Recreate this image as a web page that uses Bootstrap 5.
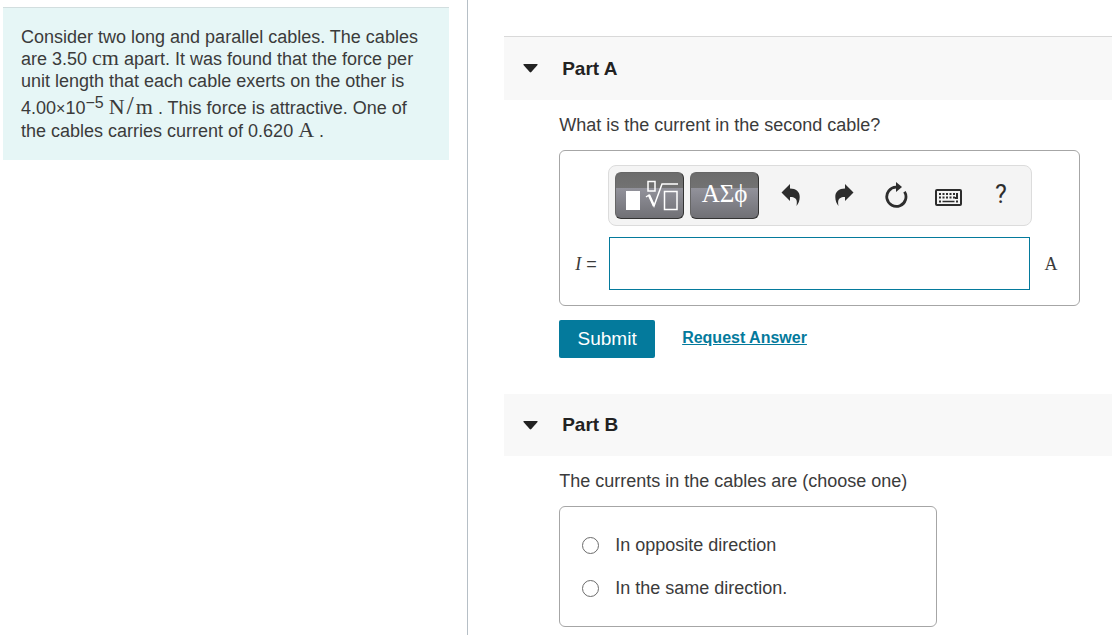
<!DOCTYPE html>
<html lang="en">
<head>
<meta charset="utf-8">
<meta name="viewport" content="width=device-width, initial-scale=1">
<title>Parallel cables</title>
<link href="https://cdn.jsdelivr.net/npm/bootstrap@5.3.0/dist/css/bootstrap.min.css" rel="stylesheet">
<style>
  body { font: 18px/22px "Liberation Sans", Arial, sans-serif; color: #3b3b3b; }
  .problem-pane { flex: 0 0 42.1%; border-right: 1px solid #b6bfc6; padding: 7px 18px 0 3px; }
  .problem-text { background: #e6f6f6; border-top: 1px solid #d2dedf; padding: 18px; }
  .problem-text sup { font-size: 16px; line-height: 22px; position: static; vertical-align: 6px; }
  .unit { font-family: "Liberation Serif", "Times New Roman", serif; font-size: 22px; line-height: 16px; }
  .slash { font-size: 26px; line-height: 16px; margin: 0 2px; }
  .times { font-size: 16px; }
  .answer-pane { min-width: 0; padding: 36px 0 0 36px; }
  .part-head { background: #f8f8f8; height: 62px; color: #222; padding: 0 19px; gap: 24px; font-size: 19px; font-weight: 700; }
  .part-first { border-top: 1px solid #d9d9d9 !important; height: 64px; }
  .part-body { padding: 14px 32px 0 55px; }
  .prompt { margin-bottom: 14px; }
  .frame { border: 1px solid #a6a6a6; border-radius: 6px; }
  .answer-frame { padding: 14px 15px 15px; }
  .tools { background: #f4f4f4; border: 1px solid #dcdcdc; border-radius: 8px; height: 61px; margin: 0 32px 11px 33px; padding: 0 6px; }
  .tile { flex: none; width: 69px; height: 47px; border: 1px solid #333; border-top-color: #666; border-left-color: #666; border-radius: 6px; background: linear-gradient(#6c6c6c 0, #727272 15px, #92929b 15px, #707075 100%); color: #fff; padding: 0; }
  .tile svg { display: block; }
  .greek { font: 25px/42px "Liberation Serif", serif; margin: 0 8px 0 6px; padding-bottom: 3px; }
  .tool { width: 48px; height: 47px; padding: 0 0 1px; border: 0; background: none; color: #2d2d2d; }
  .help { font: 25px/44px Roboto, sans-serif; }
  .symbol { width: 34px; }
  .serif { font-family: "Liberation Serif", serif; }
  .answer-input { height: 53px; border: 1px solid #047a9c; border-radius: 0; }
  .actions { gap: 27px; margin-top: 14px; }
  .submit { background: #047a9c; color: #fff; width: 96px; height: 38px; font-size: 19px; border: 0; border-radius: 2px; padding: 0; }
  .request { color: #047a9c; font-size: 16px; font-weight: 700; padding-bottom: 2px; }
  .part-next { margin-top: 36px; }
  .choices { width: 378px; max-width: 100%; padding: 27px 22px; gap: 21px; }
  .choices .form-check-input { width: 17px; height: 17px; border: 1px solid #6c6c6c; }
</style>
</head>
<body>
<div class="d-flex min-vh-100">
  <aside class="problem-pane">
    <div class="problem-text">Consider two long and parallel cables. The cables are 3.50 <span class="unit">cm</span> apart. It was found that the force per unit length that each cable exerts on the other is 4.00<span class="times">×</span>10<sup>−5</sup> <span class="unit">N<span class="slash">/</span>m</span> . This force is attractive. One of the cables carries current of 0.620 <span class="unit">A</span> .</div>
  </aside>
  <main class="answer-pane flex-grow-1">
    <section>
      <button class="part-head part-first w-100 border-0 d-flex align-items-center" type="button">
        <svg width="15" height="9" viewBox="0 0 15 9" aria-hidden="true"><path d="M1 0h13q1 0 .5 1L8.3 8q-.8.9-1.6 0L.5 1Q0 0 1 0Z" fill="#222"/></svg>Part A
      </button>
      <div class="part-body">
        <label class="prompt d-block" for="current">What is the current in the second cable?</label>
        <div class="frame answer-frame">
          <div class="tools d-flex align-items-center" role="toolbar" aria-label="Math tools">
            <button class="tile" type="button" aria-label="Templates">
              <svg width="67" height="45" viewBox="0 0 67 45" fill="none" stroke="#fff"><rect x="10" y="18" width="14" height="19" fill="#fff" stroke="none"/><rect x="32" y="8.500" width="7" height="9.500" stroke-width="1.500"/><path d="M30 24l3-2 5 11 8-22h16" stroke-width="1.500"/><path d="M33 22l5 11" stroke-width="2.500"/><rect x="48.500" y="18.500" width="12.500" height="18" stroke-width="1.500"/></svg>
            </button>
            <button class="tile greek" type="button" aria-label="Greek symbols">ΑΣϕ</button>
            <div class="d-flex flex-grow-1 justify-content-between">
              <button class="tool" type="button" aria-label="Undo"><svg width="20" height="24" viewBox="0 0 20 24" fill="currentColor"><path d="M.5 9.500L9 1v4.500c6 0 9.700 3 9.700 8.500 0 3.500-1.200 6.500-3.200 9 1.200-6.500-.5-9-6.500-9v4Z"/></svg></button>
              <button class="tool" type="button" aria-label="Redo"><svg width="20" height="24" viewBox="0 0 20 24" fill="currentColor"><path d="M19.500 9.500L11 1v4.500C5 5.500 1.300 8.500 1.300 14c0 3.500 1.200 6.500 3.200 9-1.200-6.500.5-9 6.500-9v4Z"/></svg></button>
              <button class="tool" type="button" aria-label="Reset"><svg width="24" height="26" viewBox="0 0 24 26" fill="none" stroke="currentColor" stroke-width="2.800"><path d="M14 5.200H12a9.600 9.600 0 1 0 8.500 4.500"/><path d="M12 0v10l6-5Z" fill="currentColor" stroke="none"/></svg></button>
              <button class="tool" type="button" aria-label="Keyboard"><svg class="mt-1" width="27" height="17" viewBox="0 0 27 17" fill="none" stroke="currentColor"><rect x="1" y="1" width="25" height="15" rx="1" stroke-width="2"/><path d="M4 5h16M4 8.500h16M4 12.500h2M21 12.500h2" stroke-width="2" stroke-dasharray="2 1.500"/><path d="M7.500 12.500h12" stroke-width="1.500"/><path d="M22 4v5h-2" stroke-width="2"/></svg></button>
              <button class="tool help" type="button" aria-label="Help">?</button>
            </div>
          </div>
          <div class="d-flex align-items-center">
            <label class="symbol" for="current"><i class="serif">I</i> =</label>
            <input class="answer-input form-control flex-fill w-auto" id="current" type="text">
            <span class="symbol serif text-center ps-2">A</span>
          </div>
        </div>
        <div class="actions d-flex align-items-center">
          <button class="submit" type="submit">Submit</button>
          <a class="request" href="#">Request Answer</a>
        </div>
      </div>
    </section>
    <section class="part-next">
      <button class="part-head w-100 border-0 d-flex align-items-center" type="button">
        <svg width="15" height="9" viewBox="0 0 15 9" aria-hidden="true"><path d="M1 0h13q1 0 .5 1L8.3 8q-.8.9-1.6 0L.5 1Q0 0 1 0Z" fill="#222"/></svg>Part B
      </button>
      <div class="part-body">
        <p class="prompt" id="direction">The currents in the cables are (choose one)</p>
        <div class="frame choices d-flex flex-column" role="radiogroup" aria-labelledby="direction">
          <div class="d-flex align-items-center gap-3"><input class="form-check-input m-0" type="radio" name="dir" id="opp"><label for="opp">In opposite direction</label></div>
          <div class="d-flex align-items-center gap-3"><input class="form-check-input m-0" type="radio" name="dir" id="same"><label for="same">In the same direction.</label></div>
        </div>
      </div>
    </section>
  </main>
</div>
<script src="https://cdn.jsdelivr.net/npm/bootstrap@5.3.0/dist/js/bootstrap.bundle.min.js"></script>
</body>
</html>
